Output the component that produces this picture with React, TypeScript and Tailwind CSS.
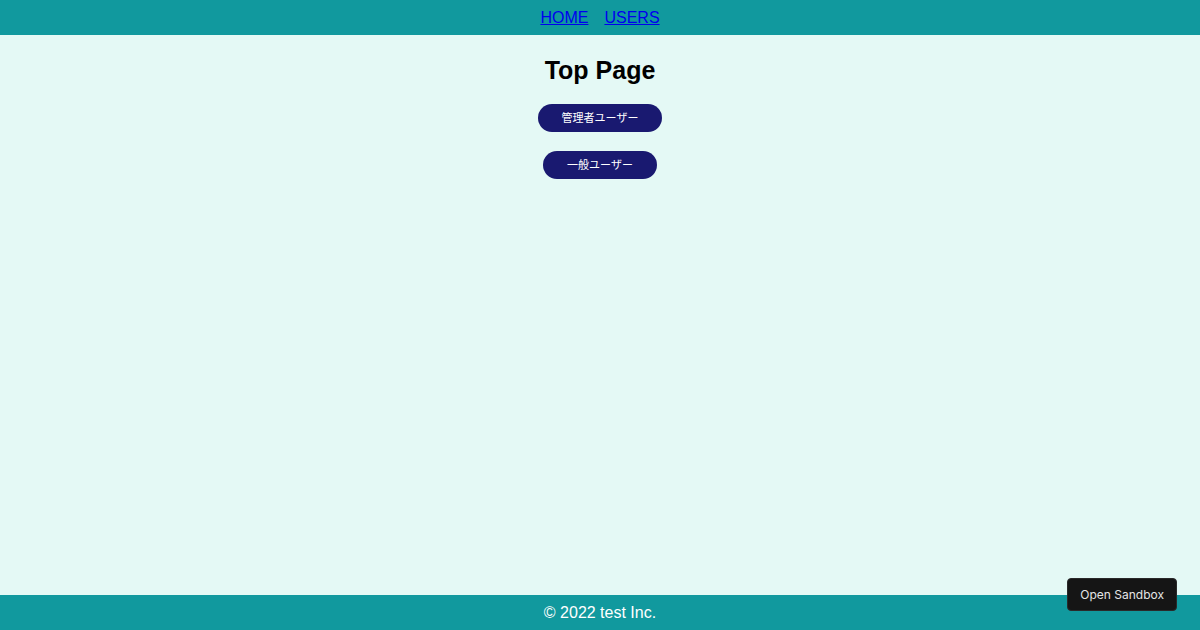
// Top page: teal header nav, centered title + two pill buttons, teal footer.

const FONT = "font-['Liberation_Sans','Noto_Sans_CJK_JP',sans-serif]";

function Header() {
  return (
    <header className="flex h-[35px] w-full items-center justify-center gap-4 bg-[#11999e]">
      <a href="#" className="text-base text-[#0000ee] underline">
        HOME
      </a>
      <a href="#" className="text-base text-[#0000ee] underline">
        USERS
      </a>
    </header>
  );
}

function PillButton({ label }: { label: string }) {
  return (
    <button className="flex h-7 items-center rounded-full bg-[#191970] px-6 text-[11px] leading-none text-white">
      {label}
    </button>
  );
}

function Footer() {
  return (
    <footer className="flex h-[35px] w-full items-center justify-center bg-[#11999e]">
      <p className="text-base text-white">© 2022 test Inc.</p>
    </footer>
  );
}

export default function App() {
  return (
    <div className={`relative flex h-[630px] w-[1200px] flex-col overflow-hidden bg-[#e4f9f5] ${FONT}`}>
      <Header />

      <main className="flex flex-1 flex-col items-center">
        <h1 className="mt-[21px] text-[25px] leading-[28px] font-bold text-black">Top Page</h1>
        <div className="mt-5 flex flex-col items-center gap-[19px]">
          <PillButton label="管理者ユーザー" />
          <PillButton label="一般ユーザー" />
        </div>
      </main>

      <Footer />

      {/* sandbox overlay button */}
      <button className="absolute right-[23px] bottom-[19px] flex h-[33px] items-center rounded border border-[#2a2a2a] bg-[#151515] px-[12px] font-['Inter',sans-serif] text-[12px] text-[#e5e5e5]">
        Open Sandbox
      </button>
    </div>
  );
}
